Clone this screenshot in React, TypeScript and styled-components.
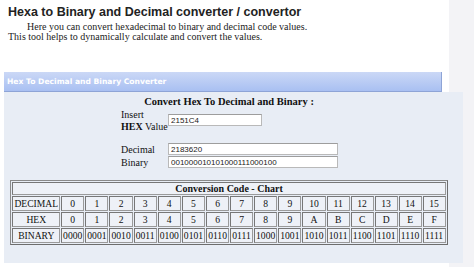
import React from "react";
import styled, { createGlobalStyle } from "styled-components";

const GlobalStyle = createGlobalStyle`
  html, body {
    margin: 0;
    padding: 0;
  }
  body {
    background: linear-gradient(to right, #ffffff 449px, #f3f3f6 449px);
    font-family: "Liberation Serif", "Times New Roman", serif;
    color: #111;
    width: 474px;
    height: 267px;
    overflow: hidden;
  }
`;

const Page = styled.div`
  padding: 5px 0 0 4px;
`;

const Title = styled.h1`
  margin: 0 0 0 4px;
  font-family: "Liberation Sans", Arial, sans-serif;
  font-size: 12.5px;
  font-weight: bold;
  color: #222;
  line-height: 14px;
`;

const Intro = styled.p`
  margin: 3px 0 0 4px;
  font-size: 10px;
  line-height: 10px;
  text-indent: 19px;
  color: #222;
`;

const HeaderBar = styled.div`
  margin-top: 30px;
  width: 438px;
  height: 20px;
  box-sizing: border-box;
  padding-left: 3px;
  display: flex;
  align-items: center;
  background: linear-gradient(to bottom, #cbd8f6, #a9c0f2);
  border-right: 1px solid #8ea4d6;
  border-bottom: 1px solid #8ea4d6;
  color: #fff;
  font-family: "DejaVu Sans", Verdana, sans-serif;
  font-weight: bold;
  font-size: 7.6px;
`;

const Panel = styled.div`
  width: 459px;
  height: 171px;
  box-sizing: border-box;
  background: #e8edf5;
  padding: 4px 0 0 7px;
`;

const FormArea = styled.div`
  width: 436px;
  display: flex;
  flex-direction: column;
  align-items: center;
`;

const FormTitle = styled.div`
  font-weight: bold;
  font-size: 10.5px;
  line-height: 12px;
`;

const Grid = styled.div`
  display: grid;
  grid-template-columns: 47px 170px;
  row-gap: 1px;
  align-self: flex-start;
  margin-left: 110px;
`;

const Label = styled.div<{ $gap?: number }>`
  font-size: 10px;
  line-height: 11px;
  margin-top: ${(p) => p.$gap ?? 0}px;
  display: flex;
  align-items: center;
`;

const InsertLabel = styled.div`
  font-size: 10px;
  line-height: 12px;
  margin-top: 1px;
`;

const Field = styled.input<{ $w: number; $gap?: number }>`
  width: ${(p) => p.$w}px;
  height: 12px;
  box-sizing: border-box;
  margin: ${(p) => p.$gap ?? 0}px 0 0 0;
  padding: 0 2px;
  border: 1px solid #b9b9b9;
  border-top-color: #9d9d9d;
  background: #fff;
  font-family: "Liberation Sans", Arial, sans-serif;
  font-size: 8px;
  color: #222;
  outline: none;
`;

const Chart = styled.table`
  margin-top: 12px;
  border: 1px solid #8a8a8a;
  border-right-color: #6d6d6d;
  border-bottom-color: #6d6d6d;
  border-collapse: separate;
  border-spacing: 1px;
  font-size: 9.6px;
  line-height: 11px;
  background: #e8edf5;
`;

const ChartHead = styled.th`
  border: 1px solid #9a9a9a;
  border-top-color: #777;
  border-left-color: #777;
  background: #eef1f7;
  padding: 0;
  height: 11px;
  font-weight: bold;
  font-size: 10px;
`;

const Cell = styled.td`
  border: 1px solid #9a9a9a;
  border-top-color: #777;
  border-left-color: #777;
  background: #eef1f7;
  text-align: center;
  padding: 1px 1px;
  min-width: 19px;
  height: 10px;
  box-sizing: content-box;
`;

const hex = "0123456789ABCDEF".split("");
const nums = hex.map((_, i) => i);

export default function App() {
  return (
    <>
      <GlobalStyle />
      <Page>
        <Title>Hexa to Binary and Decimal converter / convertor</Title>
        <Intro>
          Here you can convert hexadecimal to binary and decimal code values.
          <br />
          This tool helps to dynamically calculate and convert the values.
        </Intro>
        <HeaderBar>Hex To Decimal and Binary Converter</HeaderBar>
        <Panel>
          <FormArea>
            <FormTitle>Convert Hex To Decimal and Binary :</FormTitle>
            <Grid>
              <InsertLabel>
                Insert
                <br />
                <b>HEX</b> Value
              </InsertLabel>
              <Field $w={94} $gap={6} defaultValue="2151C4" />
              <Label $gap={9}>Decimal</Label>
              <Field $w={170} $gap={9} defaultValue="2183620" />
              <Label>Binary</Label>
              <Field $w={170} defaultValue="001000010101000111000100" />
            </Grid>
            <Chart>
              <thead>
                <tr>
                  <ChartHead colSpan={17}>Conversion Code - Chart</ChartHead>
                </tr>
              </thead>
              <tbody>
                <tr>
                  <Cell>DECIMAL</Cell>
                  {nums.map((n) => (
                    <Cell key={n}>{n}</Cell>
                  ))}
                </tr>
                <tr>
                  <Cell>HEX</Cell>
                  {hex.map((h) => (
                    <Cell key={h}>{h}</Cell>
                  ))}
                </tr>
                <tr>
                  <Cell>BINARY</Cell>
                  {nums.map((n) => (
                    <Cell key={n}>{n.toString(2).padStart(4, "0")}</Cell>
                  ))}
                </tr>
              </tbody>
            </Chart>
          </FormArea>
        </Panel>
      </Page>
    </>
  );
}
